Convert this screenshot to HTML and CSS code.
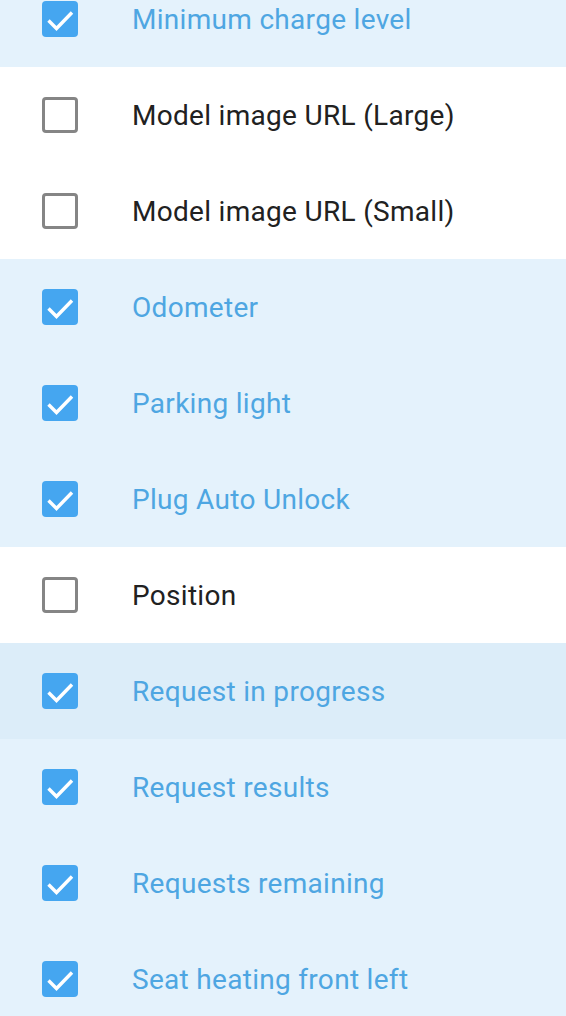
FILE: index.html
```html
<!DOCTYPE html>
<html>
<head>
<meta charset="utf-8">
<link rel="stylesheet" href="styles.css">
</head>
<body>
<ul class="list">
  <li class="row on"><span class="box"><svg viewBox="0 0 36 36"><path d="M6.5 19.5L14.5 27.5L30 11.5" /></svg></span><span class="label">Minimum charge level</span></li>
  <li class="row"><span class="box"></span><span class="label">Model image URL (Large)</span></li>
  <li class="row"><span class="box"></span><span class="label">Model image URL (Small)</span></li>
  <li class="row on"><span class="box"><svg viewBox="0 0 36 36"><path d="M6.5 19.5L14.5 27.5L30 11.5" /></svg></span><span class="label">Odometer</span></li>
  <li class="row on"><span class="box"><svg viewBox="0 0 36 36"><path d="M6.5 19.5L14.5 27.5L30 11.5" /></svg></span><span class="label">Parking light</span></li>
  <li class="row on"><span class="box"><svg viewBox="0 0 36 36"><path d="M6.5 19.5L14.5 27.5L30 11.5" /></svg></span><span class="label">Plug Auto Unlock</span></li>
  <li class="row"><span class="box"></span><span class="label">Position</span></li>
  <li class="row on hover"><span class="box"><svg viewBox="0 0 36 36"><path d="M6.5 19.5L14.5 27.5L30 11.5" /></svg></span><span class="label">Request in progress</span></li>
  <li class="row on"><span class="box"><svg viewBox="0 0 36 36"><path d="M6.5 19.5L14.5 27.5L30 11.5" /></svg></span><span class="label">Request results</span></li>
  <li class="row on"><span class="box"><svg viewBox="0 0 36 36"><path d="M6.5 19.5L14.5 27.5L30 11.5" /></svg></span><span class="label">Requests remaining</span></li>
  <li class="row on"><span class="box"><svg viewBox="0 0 36 36"><path d="M6.5 19.5L14.5 27.5L30 11.5" /></svg></span><span class="label">Seat heating front left</span></li>
</ul>
</body>
</html>
```
FILE: styles.css
```css
html, body {
  margin: 0;
  padding: 0;
  background: #ffffff;
  overflow: hidden;
}
body {
  font-family: Roboto, "Liberation Sans", sans-serif;
}
.list {
  list-style: none;
  margin: -29px 0 0 0;
  padding: 0;
}
.row {
  height: 96px;
  display: flex;
  align-items: center;
  padding-left: 42px;
  background: #ffffff;
  color: #212121;
}
.row.on {
  background: #e4f2fc;
  color: #4ea6e2;
}
.row.hover {
  background: #dcedf9;
}
.box {
  width: 36px;
  height: 36px;
  box-sizing: border-box;
  border: 3px solid #858585;
  border-radius: 4px;
  flex: none;
  display: flex;
}
.row.on .box {
  border: none;
  background: #45a6f0;
}
.box svg {
  width: 36px;
  height: 36px;
}
.box path {
  fill: none;
  stroke: #ffffff;
  stroke-width: 3.4;
  stroke-linecap: butt;
}
.label {
  margin-left: 54px;
  font-size: 28px;
  letter-spacing: 0.3px;
}
```
